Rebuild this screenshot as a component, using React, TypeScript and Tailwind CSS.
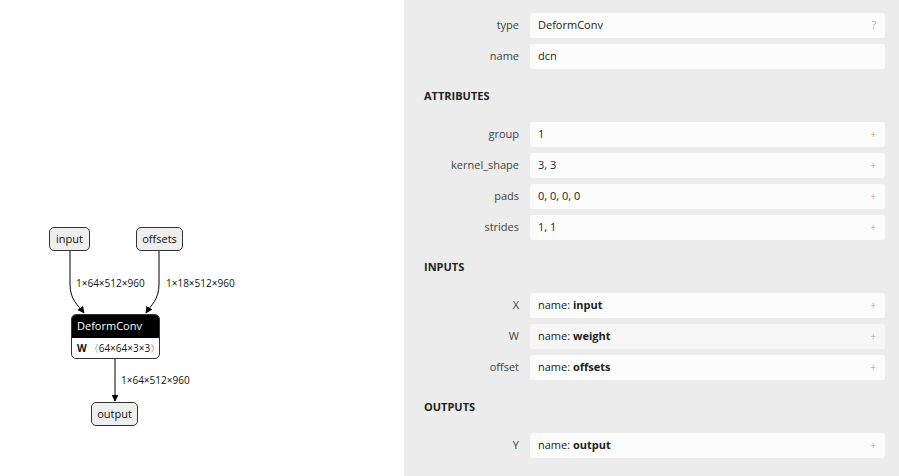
import type { ReactNode } from "react";

type Row = { label: string; value: ReactNode; icon?: "?" | "+"; hover?: boolean };

const header: Row[] = [
  { label: "type", value: "DeformConv", icon: "?" },
  { label: "name", value: "dcn" },
];

const attributes: Row[] = [
  { label: "group", value: "1", icon: "+" },
  { label: "kernel_shape", value: "3, 3", icon: "+" },
  { label: "pads", value: "0, 0, 0, 0", icon: "+" },
  { label: "strides", value: "1, 1", icon: "+" },
];

function NameValue({ name }: { name: string }) {
  return (
    <span>
      name: <b className="font-bold">{name}</b>
    </span>
  );
}

const inputs: Row[] = [
  { label: "X", value: <NameValue name="input" />, icon: "+" },
  { label: "W", value: <NameValue name="weight" />, icon: "+", hover: true },
  { label: "offset", value: <NameValue name="offsets" />, icon: "+" },
];

const outputs: Row[] = [{ label: "Y", value: <NameValue name="output" />, icon: "+" }];

function PropRow({ row }: { row: Row }) {
  return (
    <div className="flex items-center">
      <div className="w-[95px] shrink-0 text-right text-[#444]">{row.label}</div>
      <div
        className={`ml-[11px] flex h-[25px] flex-1 items-center justify-between rounded-[3px] pl-[8px] pr-[9px] text-[#222] ${
          row.hover ? "bg-[#f7f7f7]" : "bg-[#fcfcfc]"
        }`}
      >
        <span>{row.value}</span>
        {row.icon && <span className="text-[10px] text-[#aaa]">{row.icon}</span>}
      </div>
    </div>
  );
}

function Section({ title, rows }: { title?: string; rows: Row[] }) {
  return (
    <div>
      {title && (
        <div className="pb-[19px] pt-[20px] text-[11px] font-bold leading-[14px] text-[#222]">{title}</div>
      )}
      <div className="flex flex-col gap-[6px]">
        {rows.map((r) => (
          <PropRow key={r.label} row={r} />
        ))}
      </div>
    </div>
  );
}

function Graph() {
  return (
    <div className="relative h-full w-[404px] shrink-0 bg-white text-[#111]">
      <svg className="absolute left-0 top-0" width="404" height="476">
        <defs>
          <marker id="arrow" viewBox="0 0 10 10" refX="9" refY="5" markerWidth="7" markerHeight="7" orient="auto-start-reverse">
            <path d="M0,0 L10,5 L0,10 Z" fill="#000" />
          </marker>
        </defs>
        <path d="M70,251 L70,284 C70,300 78,305 84,313" fill="none" stroke="#000" strokeWidth="1" markerEnd="url(#arrow)" />
        <path d="M159,251 L159,284 C159,300 151,305 146,313" fill="none" stroke="#000" strokeWidth="1" markerEnd="url(#arrow)" />
        <path d="M115,358 L115,401" fill="none" stroke="#000" strokeWidth="1" markerEnd="url(#arrow)" />
      </svg>

      <div className="absolute left-[49px] top-[227px] flex h-[24px] w-[41px] items-center justify-center rounded-[5px] border border-[#333] bg-[#eee] text-[11px]">
        input
      </div>
      <div className="absolute left-[136px] top-[227px] flex h-[24px] w-[47px] items-center justify-center rounded-[5px] border border-[#333] bg-[#eee] text-[11px]">
        offsets
      </div>

      <div className="absolute left-[71px] top-[314px] w-[89px] overflow-hidden rounded-[5px] border border-[#333] bg-white text-[11px]">
        <div className="flex h-[23px] items-center bg-black pl-[5px] text-white">DeformConv</div>
        <div className="flex h-[20px] items-center pl-[5px] text-[10px]">
          <b className="mr-[2px] font-bold">W</b>〈64×64×3×3〉
        </div>
      </div>

      <div className="absolute left-[91px] top-[402px] flex h-[24px] w-[47px] items-center justify-center rounded-[5px] border border-[#333] bg-[#eee] text-[11px]">
        output
      </div>

      <div className="absolute left-[76px] top-[276px] text-[10px] leading-[14px]">1×64×512×960</div>
      <div className="absolute left-[166px] top-[276px] text-[10px] leading-[14px]">1×18×512×960</div>
      <div className="absolute left-[121px] top-[373px] text-[10px] leading-[14px]">1×64×512×960</div>
    </div>
  );
}

export default function App() {
  return (
    <div
      className="flex h-[476px] w-[899px] overflow-hidden text-[11px]"
      style={{ fontFamily: '"Open Sans", "Noto Sans", sans-serif' }}
    >
      <Graph />
      <div className="h-full flex-1 bg-[#ececec] pl-[20px] pr-[14px] pt-[13px]">
        <Section rows={header} />
        <Section title="ATTRIBUTES" rows={attributes} />
        <Section title="INPUTS" rows={inputs} />
        <Section title="OUTPUTS" rows={outputs} />
      </div>
    </div>
  );
}
